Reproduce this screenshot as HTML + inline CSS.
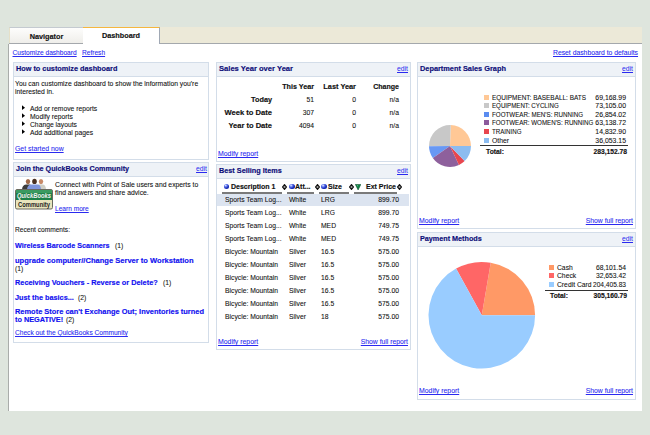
<!DOCTYPE html>
<html><head><meta charset="utf-8">
<style>
*{margin:0;padding:0;box-sizing:border-box}
html,body{width:650px;height:435px;overflow:hidden;background:#dee5dd;font-family:"Liberation Sans",sans-serif;font-size:6.75px;color:#111}
.a{-webkit-text-stroke:0.08px currentColor}
.ttl,.tab,.b,.bl{-webkit-text-stroke:0.15px currentColor}
.a{position:absolute;white-space:nowrap;line-height:8px}
.b{font-weight:bold;font-size:7.3px;color:#111}
.bar{position:absolute;left:9px;top:27px;width:633px;height:17px;background:#ece9d8;border-bottom:1px solid #a4a8ac}
.content{position:absolute;left:8px;top:44px;width:634px;height:367px;background:#fff;border-left:1px solid #a9acaa}
.tab{position:absolute;top:27px;height:17px;font-weight:bold;font-size:7.3px;text-align:center;color:#111}
.pnl{position:absolute;border:1px solid #d3dde9;background:#fff}
.hdr{position:absolute;left:0;top:0;right:0;height:14px;background:#eef2f7;border-bottom:1px solid #d3dde9}
.ttl{position:absolute;left:2px;top:2px;font-weight:bold;color:#0c0c78;font-size:7.3px;line-height:8px;white-space:nowrap}
.edit{position:absolute;right:2px;top:2px;color:#2a2af0;text-decoration:underline;line-height:8px;font-size:6.8px}
.lk{color:#2a2af0;text-decoration:underline}
.bl{color:#1010f0;font-weight:bold;font-size:7.3px}
.tri{position:absolute;width:0;height:0;border-left:3.2px solid #111;border-top:2.8px solid transparent;border-bottom:2.8px solid transparent;margin-top:-0.3px}
.ball{position:absolute;width:5.5px;height:5.5px;border-radius:50%;background:radial-gradient(circle at 35% 30%,#eef2ff 0,#6a80f0 25%,#1a2ec0 55%,#081878 100%)}
.sq{position:absolute;width:5px;height:5px}
.n{text-align:right}
.lg{font-size:7px;transform:scaleX(0.9);transform-origin:0 0}
</style></head><body>
<div class="bar"></div>
<div class="tab" style="left:9px;width:74px;height:16px;background:linear-gradient(#fdfdfc,#efeeea);border-top:1px solid #c4cad0;border-left:1px solid #e6e0c8;line-height:16px;padding-top:1px">Navigator</div>
<div class="tab" style="left:83px;width:77px;height:17px;background:#fff;border-top:1px solid #f5b63e;border-right:1px solid #a0a8b4;line-height:15px">Dashboard</div>
<div class="content"></div>

<div class="a lk" style="left:12.5px;top:49px;font-size:6.6px">Customize dashboard</div>
<div class="a lk" style="left:82px;top:49px;font-size:6.6px">Refresh</div>
<div class="a lk" style="left:553px;top:49px;font-size:6.8px">Reset dashboard to defaults</div>

<!-- Left column -->
<div class="pnl" style="left:13px;top:62px;width:196px;height:98px">
  <div class="hdr"><div class="ttl" style="font-size:7.31px">How to customize dashboard</div></div>
</div>
<div class="a" style="left:15px;top:80px;font-size:6.8px">You can customize dashboard to show the information you're</div>
<div class="a" style="left:15px;top:88px;font-size:6.8px">interested in.</div>
<svg style="position:absolute;left:22px;top:105px" width="4" height="7" viewBox="0 0 4 7"><path d="M0 0.3 L3 2.7 L0 5.1 Z" fill="#000"/></svg><div class="a" style="left:30px;top:105px">Add or remove reports</div>
<svg style="position:absolute;left:22px;top:113px" width="4" height="7" viewBox="0 0 4 7"><path d="M0 0.3 L3 2.7 L0 5.1 Z" fill="#000"/></svg><div class="a" style="left:30px;top:113px">Modify reports</div>
<svg style="position:absolute;left:22px;top:121px" width="4" height="7" viewBox="0 0 4 7"><path d="M0 0.3 L3 2.7 L0 5.1 Z" fill="#000"/></svg><div class="a" style="left:30px;top:121px">Change layouts</div>
<svg style="position:absolute;left:22px;top:129px" width="4" height="7" viewBox="0 0 4 7"><path d="M0 0.3 L3 2.7 L0 5.1 Z" fill="#000"/></svg><div class="a" style="left:30px;top:129px">Add additional pages</div>
<div class="a lk" style="left:15px;top:145px;font-size:6.9px">Get started now</div>

<div class="pnl" style="left:13px;top:162px;width:196px;height:181px">
  <div class="hdr"><div class="ttl" style="font-size:7.2px">Join the QuickBooks Community</div><div class="edit" style="right:1px">edit</div></div>
</div>
<!-- logo -->
<svg style="position:absolute;left:15px;top:178px" width="39" height="32" viewBox="0 0 39 32">
  <path d="M7 12 Q7 7 11 6.5 L15 6.5 Q17 7 17 12 Z" fill="#3c3c3c"/>
  <path d="M21 12 Q21 7 24 6.5 L28 6.5 Q31 7 31 12 Z" fill="#cfcfc6"/>
  <path d="M12 12 Q12 7 16 6.5 L23 6.5 Q26 7 26 12 Z" fill="#7f95dc"/>
  <ellipse cx="13" cy="3.6" rx="2.2" ry="2.6" fill="#a06848"/>
  <ellipse cx="19.5" cy="3.4" rx="2.3" ry="2.7" fill="#4a3020"/>
  <ellipse cx="26" cy="3.6" rx="2.2" ry="2.6" fill="#c88a68"/>
  <rect x="0.5" y="11.5" width="37" height="19.5" rx="1.5" fill="#e9e4bc" stroke="#6a6a60" stroke-width="1"/>
  <rect x="1" y="12" width="36" height="10" fill="#1d8048"/>
  <rect x="1" y="12" width="36" height="3" fill="#3a9a60"/>
  <text x="2" y="19.6" font-family="Liberation Sans" font-size="6.4" font-weight="bold" font-style="italic" fill="#f2f2f2" textLength="34" lengthAdjust="spacingAndGlyphs">QuickBooks</text>
  <text x="3" y="29" font-family="Liberation Sans" font-size="6.6" font-weight="bold" fill="#1e1e1e" textLength="32" lengthAdjust="spacingAndGlyphs">Community</text>
</svg>
<div class="a" style="left:55px;top:181px;font-size:6.8px">Connect with Point of Sale users and experts to</div>
<div class="a" style="left:55px;top:189px;font-size:6.8px">find answers and share advice.</div>
<div class="a lk" style="left:55px;top:205px;font-size:6.6px">Learn more</div>
<div class="a" style="left:15px;top:226px;font-size:6.6px">Recent comments:</div>
<div class="a bl" style="left:15px;top:242px;font-size:7.2px">Wireless Barcode Scanners</div><div class="a" style="left:115px;top:242px">(1)</div>
<div class="a bl" style="left:15px;top:257px;font-size:7.55px">upgrade computer//Change Server to Workstation</div>
<div class="a" style="left:15px;top:265px">(1)</div>
<div class="a bl" style="left:15px;top:279px;font-size:7.35px">Receiving Vouchers - Reverse or Delete?</div><div class="a" style="left:163px;top:279px">(1)</div>
<div class="a bl" style="left:15px;top:294px">Just the basics...</div><div class="a" style="left:78px;top:294px">(2)</div>
<div class="a bl" style="left:15px;top:308px;font-size:7.45px">Remote Store can't Exchange Out; Inventories turned</div>
<div class="a bl" style="left:15px;top:316px">to NEGATIVE!</div><div class="a" style="left:66px;top:316px">(2)</div>
<div class="a lk" style="left:15px;top:329px;font-size:6.6px">Check out the QuickBooks Community</div>

<!-- Middle column -->
<div class="pnl" style="left:216px;top:62px;width:195px;height:100px">
  <div class="hdr"><div class="ttl" style="font-size:7.6px">Sales Year over Year</div><div class="edit">edit</div></div>
</div>
<div class="a b n" style="left:264px;top:83px;width:50px;font-size:7.18px">This Year</div>
<div class="a b n" style="left:306px;top:83px;width:50px;font-size:7.38px">Last Year</div>
<div class="a b n" style="left:349px;top:83px;width:50px;font-size:7.06px">Change</div>
<div class="a b n" style="left:200px;top:96px;width:72px">Today</div>
<div class="a b n" style="left:200px;top:109px;width:72px;font-size:7.6px">Week to Date</div>
<div class="a b n" style="left:200px;top:122px;width:72px;font-size:7.55px">Year to Date</div>
<div class="a n" style="left:264px;top:96px;width:50px">51</div>
<div class="a n" style="left:264px;top:109px;width:50px">307</div>
<div class="a n" style="left:264px;top:122px;width:50px">4094</div>
<div class="a n" style="left:306px;top:96px;width:50px">0</div>
<div class="a n" style="left:306px;top:109px;width:50px">0</div>
<div class="a n" style="left:306px;top:122px;width:50px">0</div>
<div class="a n" style="left:349px;top:96px;width:50px">n/a</div>
<div class="a n" style="left:349px;top:109px;width:50px">n/a</div>
<div class="a n" style="left:349px;top:122px;width:50px">n/a</div>
<div class="a lk" style="left:218px;top:150px;font-size:6.9px">Modify report</div>

<div class="pnl" style="left:216px;top:164px;width:195px;height:186px">
  <div class="hdr"><div class="ttl" style="font-size:7.29px">Best Selling Items</div><div class="edit">edit</div></div>
</div>
<!-- table header -->
<div class="ball" style="left:223.5px;top:183.5px"></div><div class="a b" style="left:231px;top:183px;font-size:7px">Description 1</div>
<div style="position:absolute;left:222px;top:192px;width:60px;height:2px;background:#7a7a7a"></div>
<div class="ball" style="left:289px;top:183.5px"></div><div class="a b" style="left:295px;top:183px;font-size:7px">Att...</div>
<div style="position:absolute;left:287px;top:192px;width:27px;height:2px;background:#7a7a7a"></div>
<div class="ball" style="left:321px;top:183.5px"></div><div class="a b" style="left:328px;top:183px;font-size:7px">Size</div>
<div style="position:absolute;left:319px;top:192px;width:30px;height:2px;background:#7a7a7a"></div>
<svg style="position:absolute;left:355px;top:184px" width="6" height="6" viewBox="0 0 6 6"><path d="M0.4 0.4 H5.8 L3.1 5.9 Z" fill="#12864a" stroke="#0a4a28" stroke-width="0.6"/><path d="M1.8 1.2 L3 1.2 L2.6 2.6 Z" fill="#6ad49a"/></svg>
<div class="a b" style="left:366px;top:183px;font-size:7px">Ext Price</div>
<div style="position:absolute;left:354px;top:192px;width:43px;height:2px;background:#7a7a7a"></div>
<svg style="position:absolute;left:282px;top:184px" width="5" height="6" viewBox="0 0 5 6"><path d="M2.5 0.6 L4.4 3 L2.5 5.4 L0.6 3 Z" fill="#9a9a9a" stroke="#111" stroke-width="1.15"/></svg>
<svg style="position:absolute;left:315px;top:184px" width="5" height="6" viewBox="0 0 5 6"><path d="M2.5 0.6 L4.4 3 L2.5 5.4 L0.6 3 Z" fill="#9a9a9a" stroke="#111" stroke-width="1.15"/></svg>
<svg style="position:absolute;left:349px;top:184px" width="5" height="6" viewBox="0 0 5 6"><path d="M2.5 0.6 L4.4 3 L2.5 5.4 L0.6 3 Z" fill="#9a9a9a" stroke="#111" stroke-width="1.15"/></svg>
<svg style="position:absolute;left:397px;top:184px" width="5" height="6" viewBox="0 0 5 6"><path d="M2.5 0.6 L4.4 3 L2.5 5.4 L0.6 3 Z" fill="#9a9a9a" stroke="#111" stroke-width="1.15"/></svg>
<div style="position:absolute;left:217px;top:194px;width:192px;height:12px;background:#dce4f0"></div>
<div id="rows"></div>
<div class="a" style="left:225px;top:196px">Sports Team Log...</div><div class="a" style="left:289px;top:196px">White</div><div class="a" style="left:321px;top:196px">LRG</div><div class="a n" style="left:350px;top:196px;width:49px">899.70</div>
<div class="a" style="left:225px;top:209px">Sports Team Log...</div><div class="a" style="left:289px;top:209px">White</div><div class="a" style="left:321px;top:209px">LRG</div><div class="a n" style="left:350px;top:209px;width:49px">899.70</div>
<div class="a" style="left:225px;top:222px">Sports Team Log...</div><div class="a" style="left:289px;top:222px">White</div><div class="a" style="left:321px;top:222px">MED</div><div class="a n" style="left:350px;top:222px;width:49px">749.75</div>
<div class="a" style="left:225px;top:235px">Sports Team Log...</div><div class="a" style="left:289px;top:235px">White</div><div class="a" style="left:321px;top:235px">MED</div><div class="a n" style="left:350px;top:235px;width:49px">749.75</div>
<div class="a" style="left:225px;top:248px">Bicycle: Mountain</div><div class="a" style="left:289px;top:248px">Silver</div><div class="a" style="left:321px;top:248px">16.5</div><div class="a n" style="left:350px;top:248px;width:49px">575.00</div>
<div class="a" style="left:225px;top:261px">Bicycle: Mountain</div><div class="a" style="left:289px;top:261px">Silver</div><div class="a" style="left:321px;top:261px">16.5</div><div class="a n" style="left:350px;top:261px;width:49px">575.00</div>
<div class="a" style="left:225px;top:274px">Bicycle: Mountain</div><div class="a" style="left:289px;top:274px">Silver</div><div class="a" style="left:321px;top:274px">16.5</div><div class="a n" style="left:350px;top:274px;width:49px">575.00</div>
<div class="a" style="left:225px;top:287px">Bicycle: Mountain</div><div class="a" style="left:289px;top:287px">Silver</div><div class="a" style="left:321px;top:287px">16.5</div><div class="a n" style="left:350px;top:287px;width:49px">575.00</div>
<div class="a" style="left:225px;top:300px">Bicycle: Mountain</div><div class="a" style="left:289px;top:300px">Silver</div><div class="a" style="left:321px;top:300px">16.5</div><div class="a n" style="left:350px;top:300px;width:49px">575.00</div>
<div class="a" style="left:225px;top:313px">Bicycle: Mountain</div><div class="a" style="left:289px;top:313px">Silver</div><div class="a" style="left:321px;top:313px">18</div><div class="a n" style="left:350px;top:313px;width:49px">575.00</div>
<div class="a lk" style="left:218px;top:338px;font-size:6.9px">Modify report</div>
<div class="a lk n" style="left:330px;top:338px;width:78px;font-size:6.8px">Show full report</div>

<!-- Right column -->
<div class="pnl" style="left:417px;top:62px;width:219px;height:167px">
  <div class="hdr"><div class="ttl" style="font-size:7.37px">Department Sales Graph</div><div class="edit">edit</div></div>
</div>
<svg style="position:absolute;left:419.5px;top:116px" width="60" height="60" viewBox="0 0 60 60" id="pie1"><path d="M30 30 L51.00 30.00 A21 21 0 0 0 30.75 9.01 Z" fill="#ffc896"/><path d="M30 30 L30.75 9.01 A21 21 0 0 0 9.00 30.33 Z" fill="#c8c8c8"/><path d="M30 30 L9.00 30.33 A21 21 0 0 0 12.80 42.05 Z" fill="#6898f4"/><path d="M30 30 L12.80 42.05 A21 21 0 0 0 38.98 48.99 Z" fill="#8e609c"/><path d="M30 30 L38.98 48.99 A21 21 0 0 0 44.63 45.06 Z" fill="#e8464e"/><path d="M30 30 L44.63 45.06 A21 21 0 0 0 51.00 30.00 Z" fill="#8cbcf0"/></svg>
<div class="sq" style="left:484px;top:95px;background:#ffc896"></div><div class="a lg" style="left:492px;top:94px;transform:scaleX(0.92)">EQUIPMENT: BASEBALL: BATS</div><div class="a n" style="left:580px;top:94px;width:46px;font-size:6.9px">69,168.99</div>
<div class="sq" style="left:484px;top:103px;background:#c8c8c8"></div><div class="a lg" style="left:492px;top:102px;transform:scaleX(0.88)">EQUIPMENT: CYCLING</div><div class="a n" style="left:580px;top:102px;width:46px;font-size:6.9px">73,105.00</div>
<div class="sq" style="left:484px;top:112px;background:#5a8cf0"></div><div class="a lg" style="left:492px;top:111px;transform:scaleX(0.89)">FOOTWEAR: MEN'S: RUNNING</div><div class="a n" style="left:580px;top:111px;width:46px;font-size:6.9px">26,854.02</div>
<div class="sq" style="left:484px;top:120px;background:#8c5a9c"></div><div class="a lg" style="left:492px;top:119px;transform:scaleX(0.885)">FOOTWEAR: WOMEN'S: RUNNING</div><div class="a n" style="left:580px;top:119px;width:46px;font-size:6.9px">63,138.72</div>
<div class="sq" style="left:484px;top:129px;background:#e8464e"></div><div class="a lg" style="left:492px;top:128px;transform:scaleX(0.88)">TRAINING</div><div class="a n" style="left:580px;top:128px;width:46px;font-size:6.9px">14,832.90</div>
<div class="sq" style="left:484px;top:138px;background:#8cbcf0"></div><div class="a lg" style="left:492px;top:137px;transform:scaleX(0.97)">Other</div><div class="a n" style="left:580px;top:137px;width:46px;font-size:6.9px">36,053.15</div>
<div style="position:absolute;left:480px;top:145px;width:148px;height:1px;background:#333"></div>
<div class="a b" style="left:486px;top:148px;font-size:6.8px">Total:</div><div class="a b n" style="left:560px;top:148px;width:67px;font-size:6.7px">283,152.78</div>
<div class="a lk" style="left:419px;top:217px;font-size:6.9px">Modify report</div>
<div class="a lk n" style="left:540px;top:217px;width:93px;font-size:6.8px">Show full report</div>

<div class="pnl" style="left:417px;top:232px;width:219px;height:168px">
  <div class="hdr"><div class="ttl" style="font-size:7.23px">Payment Methods</div><div class="edit">edit</div></div>
</div>
<svg style="position:absolute;left:420px;top:254px" width="124" height="124" viewBox="0 0 124 124" id="pie2"><path d="M61.8 61.3 L115.10 61.30 A53.3 53.3 0 0 0 70.74 8.76 Z" fill="#ff9966"/><path d="M61.8 61.3 L70.74 8.76 A53.3 53.3 0 0 0 36.07 14.62 Z" fill="#ff6666"/><path d="M61.8 61.3 L36.07 14.62 A53.3 53.3 0 1 0 115.10 61.30 Z" fill="#99ccff"/></svg>
<div class="sq" style="left:549px;top:265px;background:#ff9966"></div><div class="a" style="left:557px;top:264px">Cash</div><div class="a n" style="left:580px;top:264px;width:46px">68,101.54</div>
<div class="sq" style="left:549px;top:273px;background:#ff6666"></div><div class="a" style="left:557px;top:272px">Check</div><div class="a n" style="left:580px;top:272px;width:46px">32,653.42</div>
<div class="sq" style="left:549px;top:282px;background:#99ccff"></div><div class="a" style="left:557px;top:281px">Credit Card</div><div class="a n" style="left:580px;top:281px;width:46px;font-size:6.6px">204,405.83</div>
<div style="position:absolute;left:545px;top:289.5px;width:83px;height:1px;background:#333"></div>
<div class="a b" style="left:550px;top:292px;font-size:6.8px">Total:</div><div class="a b n" style="left:560px;top:292px;width:67px;font-size:6.7px">305,160.79</div>
<div class="a lk" style="left:419px;top:387px;font-size:6.9px">Modify report</div>
<div class="a lk n" style="left:540px;top:387px;width:93px;font-size:6.8px">Show full report</div>
</body></html>
